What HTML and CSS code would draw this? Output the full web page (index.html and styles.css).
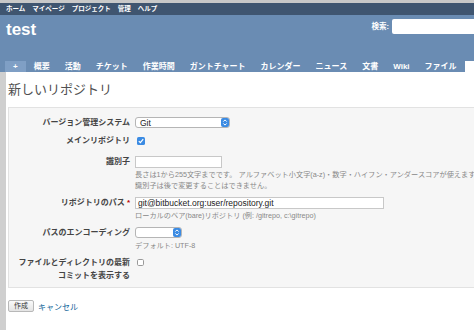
FILE: index.html
```html
<!DOCTYPE html>
<html lang="ja">
<head>
  <meta charset="UTF-8">
  <meta name="viewport" content="width=device-width, initial-scale=1.0">
  <title>新しいリポジトリ - test</title>
  <link rel="stylesheet" href="styles.css">
</head>
<body>
  <div class="top-menu">
    <ul>
      <li>ホーム</li>
      <li>マイページ</li>
      <li>プロジェクト</li>
      <li>管理</li>
      <li>ヘルプ</li>
    </ul>
  </div>

  <div class="header">
    <div class="header-top">
      <h1>test</h1>
      <div class="search">
        <label>検索:</label>
        <span class="search-box"></span>
      </div>
    </div>
    <ul class="tabs">
      <li class="new">+</li>
      <li>概要</li>
      <li>活動</li>
      <li>チケット</li>
      <li>作業時間</li>
      <li>ガントチャート</li>
      <li>カレンダー</li>
      <li>ニュース</li>
      <li>文書</li>
      <li>Wiki</li>
      <li>ファイル</li>
      <li class="selected"></li>
    </ul>
  </div>

  <div class="main">
    <div class="strip"></div>
    <div class="content">
      <h2 class="title">新しいリポジトリ</h2>

      <div class="box">
        <div class="row">
          <label>バージョン管理システム</label>
          <div class="field">
            <div class="control">
              <span class="select">
                <span class="select-text">Git</span>
                <span class="arrows">
                  <svg width="8" height="9" viewBox="0 0 8 9"><path d="M2.3 3.6 L4 1.9 L5.7 3.6 M2.3 5.4 L4 7.1 L5.7 5.4" fill="none" stroke="#fff" stroke-width="1"/></svg>
                </span>
              </span>
            </div>
          </div>
        </div>

        <div class="row row-check">
          <label>メインリポジトリ</label>
          <div class="field">
            <div class="control">
              <svg class="check" width="8" height="8" viewBox="0 0 8 8"><rect x="0" y="0" width="8" height="8" rx="1.6" fill="#3b8be3"/><path d="M1.8 4.1 L3.4 5.7 L6.2 2.2" fill="none" stroke="#fff" stroke-width="1.2"/></svg>
            </div>
          </div>
        </div>

        <div class="row">
          <label>識別子</label>
          <div class="field">
            <div class="control">
              <span class="text-input identifier"></span>
            </div>
            <div class="info">
              <em>長さは1から255文字までです。 アルファベット小文字(a-z)・数字・ハイフン・アンダースコアが使えます。</em>
              <em>識別子は後で変更することはできません。</em>
            </div>
          </div>
        </div>

        <div class="row">
          <label>リポジトリのパス <span class="required">*</span></label>
          <div class="field">
            <div class="control">
              <span class="text-input path">git@bitbucket.org:user/repository.git</span>
            </div>
            <div class="info">
              <em>ローカルのベア(bare)リポジトリ (例: /gitrepo, c:\gitrepo)</em>
            </div>
          </div>
        </div>

        <div class="row">
          <label>パスのエンコーディング</label>
          <div class="field">
            <div class="control">
              <span class="select encoding">
                <span class="select-text"></span>
                <span class="arrows">
                  <svg width="8" height="9" viewBox="0 0 8 9"><path d="M2.3 3.6 L4 1.9 L5.7 3.6 M2.3 5.4 L4 7.1 L5.7 5.4" fill="none" stroke="#fff" stroke-width="1"/></svg>
                </span>
              </span>
            </div>
            <div class="info">
              <em>デフォルト: UTF-8</em>
            </div>
          </div>
        </div>

        <div class="row">
          <label>ファイルとディレクトリの最新コミットを表示する</label>
          <div class="field">
            <div class="control">
              <svg class="check" width="7" height="7" viewBox="0 0 7 7"><rect x="0.5" y="0.5" width="6" height="6" rx="1.2" fill="#fff" stroke="#9a9a9a"/></svg>
            </div>
          </div>
        </div>
      </div>

      <div class="actions">
        <span class="btn">作成</span>
        <a class="cancel" href="#">キャンセル</a>
      </div>
    </div>
  </div>
</body>
</html>
```

FILE: styles.css
```css
/* styles.css */
body {
  margin: 0;
  font-family: "Liberation Sans", "Noto Sans CJK JP", sans-serif;
  font-size: 8px;
  color: #333;
  background: #fff;
  overflow: hidden;
}

/* top menu */
.top-menu {
  border-top: 3px solid #c8c8c8;
  background: #3f5570;
  height: 12px;
  line-height: 12px;
  padding-left: 6px;
}

.top-menu ul {
  list-style: none;
  margin: 0;
  padding: 0;
  display: flex;
  gap: 7px;
}

.top-menu li {
  color: #fff;
  font-weight: bold;
  font-size: 6.5px;
}

/* header */
.header {
  background: #6a8cb3;
  height: 57px;
  overflow: hidden;
}

.header-top {
  display: flex;
  height: 46px;
}

.header h1 {
  margin: 5px 0 0 6px;
  font-size: 17px;
  line-height: 20px;
  height: 20px;
  color: #fff;
  font-weight: bold;
}

.search {
  margin-left: auto;
  display: flex;
  align-items: flex-start;
  padding-top: 4px;
  color: #fff;
  font-weight: bold;
  font-size: 7.5px;
}

.search label {
  line-height: 15px;
  margin-right: 3px;
}

.search-box {
  width: 84px;
  height: 15px;
  background: #fff;
  border-radius: 2px;
  margin-right: -2px;
}

.tabs {
  list-style: none;
  margin: 0;
  padding: 0 0 0 5px;
  display: flex;
  height: 11px;
}

.tabs li {
  padding: 0 7px;
  margin-right: 1px;
  color: #fff;
  font-weight: bold;
  font-size: 8px;
  line-height: 11px;
  white-space: nowrap;
}

.tabs li.new {
  padding: 0 8px;
  background: #7f9fc5;
}

.tabs li.selected {
  width: 20px;
  background: #fff;
}

/* main */
.main {
  display: flex;
  min-height: 258px;
}

.strip {
  flex: none;
  width: 6px;
  background: #cfcfcf;
}

.content {
  flex: 1;
  min-width: 0;
  padding: 10px 0 0 2px;
  overflow: hidden;
}

.title {
  margin: 0 0 9px;
  font-size: 13px;
  line-height: 16px;
  font-weight: normal;
  color: #505050;
}

.box {
  background: #f6f6f6;
  border: 1px solid #e2e2e2;
  margin-right: -10px;
  padding: 8px 0 5px;
  display: flex;
  flex-direction: column;
  gap: 5px;
}

.row {
  display: flex;
  align-items: flex-start;
}

.row-check {
  margin-bottom: 3px;
}

.row label {
  flex: none;
  width: 116px;
  margin: 0 5px;
  text-align: right;
  font-weight: bold;
  font-size: 8px;
  line-height: 13px;
  color: #444;
}

.required {
  color: #bb0000;
}

.field {
  flex: 1;
  min-width: 0;
}

.control {
  height: 13px;
  display: flex;
  align-items: center;
}

.info {
  margin-top: 1px;
}

.info em {
  display: block;
  font-style: normal;
  font-size: 7.2px;
  line-height: 11px;
  color: #888;
  white-space: nowrap;
}

.select {
  box-sizing: border-box;
  width: 95px;
  height: 11px;
  border: 1px solid #b5b5b5;
  border-radius: 3px;
  background: #fff;
  display: flex;
  align-items: center;
  justify-content: space-between;
  padding-left: 4px;
  font-size: 8.5px;
  color: #222;
}

.select.encoding {
  width: 47px;
}

.arrows {
  display: flex;
  width: 8px;
  height: 9px;
  background: #3b8be3;
  border-radius: 2px;
}

.text-input {
  box-sizing: border-box;
  height: 12px;
  border: 1px solid #c8c8c8;
  background: #fff;
  font-size: 8.5px;
  line-height: 10px;
  padding: 0 2px;
  color: #222;
  white-space: nowrap;
}

.identifier {
  width: 87px;
}

.path {
  width: 249px;
}

.check {
  margin-left: 2px;
}

/* buttons */
.actions {
  margin-top: 12px;
  display: flex;
  align-items: center;
  gap: 4px;
}

.btn {
  box-sizing: border-box;
  height: 12px;
  padding: 0 5px;
  border: 1px solid #b8b8b8;
  border-radius: 2px;
  background: linear-gradient(#fafafa, #e4e4e4);
  font-size: 7px;
  line-height: 10px;
  color: #333;
}

.cancel {
  color: #169;
  font-size: 8px;
  text-decoration: none;
}
```
